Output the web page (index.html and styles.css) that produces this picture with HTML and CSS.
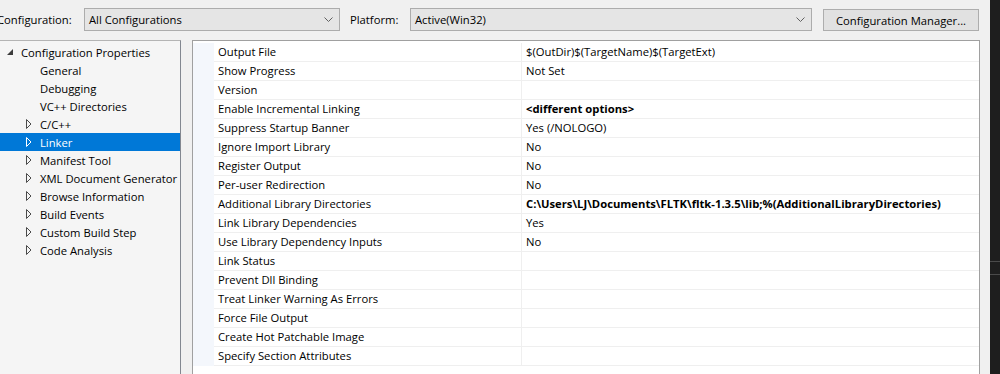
FILE: index.html
```html
<!DOCTYPE html>
<html>
<head>
<meta charset="utf-8">
<title>Property Pages</title>
<link rel="stylesheet" href="styles.css">
</head>
<body>
<div class="page">
  <div class="main">
    <div class="toolbar">
      <span class="lbl lbl-config">Configuration:</span>
      <div class="combo combo-config"><span>All Configurations</span><svg class="chev" viewBox="0 0 9 5"><polyline points="0.5,0.5 4.5,4.5 8.5,0.5" fill="none" stroke="#606060" stroke-width="1"/></svg></div>
      <span class="lbl lbl-platform">Platform:</span>
      <div class="combo combo-platform"><span>Active(Win32)</span><svg class="chev" viewBox="0 0 9 5"><polyline points="0.5,0.5 4.5,4.5 8.5,0.5" fill="none" stroke="#606060" stroke-width="1"/></svg></div>
      <div class="btn">Configuration Manager...</div>
    </div>
    <div class="body">
      <div class="tree">
        <div class="node root"><svg class="exp" viewBox="0 0 6 6"><polygon points="6,0 6,6 0,6" fill="#3c3c3c"/></svg><span>Configuration Properties</span></div>
        <div class="node leaf">General</div>
        <div class="node leaf">Debugging</div>
        <div class="node leaf">VC++ Directories</div>
        <div class="node child"><svg class="tog" viewBox="0 0 6 10"><polygon points="0.5,0.5 5,5 0.5,9.5" fill="none" stroke="#4a4a4a" stroke-width="1"/></svg><span>C/C++</span></div>
        <div class="node child sel"><svg class="tog" viewBox="0 0 6 10"><polygon points="0.5,0.5 5,5 0.5,9.5" fill="none" stroke="#ffffff" stroke-width="1"/></svg><span>Linker</span></div>
        <div class="node child"><svg class="tog" viewBox="0 0 6 10"><polygon points="0.5,0.5 5,5 0.5,9.5" fill="none" stroke="#4a4a4a" stroke-width="1"/></svg><span>Manifest Tool</span></div>
        <div class="node child"><svg class="tog" viewBox="0 0 6 10"><polygon points="0.5,0.5 5,5 0.5,9.5" fill="none" stroke="#4a4a4a" stroke-width="1"/></svg><span>XML Document Generator</span></div>
        <div class="node child"><svg class="tog" viewBox="0 0 6 10"><polygon points="0.5,0.5 5,5 0.5,9.5" fill="none" stroke="#4a4a4a" stroke-width="1"/></svg><span>Browse Information</span></div>
        <div class="node child"><svg class="tog" viewBox="0 0 6 10"><polygon points="0.5,0.5 5,5 0.5,9.5" fill="none" stroke="#4a4a4a" stroke-width="1"/></svg><span>Build Events</span></div>
        <div class="node child"><svg class="tog" viewBox="0 0 6 10"><polygon points="0.5,0.5 5,5 0.5,9.5" fill="none" stroke="#4a4a4a" stroke-width="1"/></svg><span>Custom Build Step</span></div>
        <div class="node child"><svg class="tog" viewBox="0 0 6 10"><polygon points="0.5,0.5 5,5 0.5,9.5" fill="none" stroke="#4a4a4a" stroke-width="1"/></svg><span>Code Analysis</span></div>
      </div>
      <div class="grid">
        <div class="row"><div class="gut"></div><div class="name">Output File</div><div class="val">$(OutDir)$(TargetName)$(TargetExt)</div></div>
        <div class="row"><div class="gut"></div><div class="name">Show Progress</div><div class="val">Not Set</div></div>
        <div class="row"><div class="gut"></div><div class="name">Version</div><div class="val"></div></div>
        <div class="row"><div class="gut"></div><div class="name">Enable Incremental Linking</div><div class="val bold">&lt;different options&gt;</div></div>
        <div class="row"><div class="gut"></div><div class="name">Suppress Startup Banner</div><div class="val">Yes (/NOLOGO)</div></div>
        <div class="row"><div class="gut"></div><div class="name">Ignore Import Library</div><div class="val">No</div></div>
        <div class="row"><div class="gut"></div><div class="name">Register Output</div><div class="val">No</div></div>
        <div class="row"><div class="gut"></div><div class="name">Per-user Redirection</div><div class="val">No</div></div>
        <div class="row"><div class="gut"></div><div class="name">Additional Library Directories</div><div class="val bold">C:\Users\LJ\Documents\FLTK\fltk-1.3.5\lib;%(AdditionalLibraryDirectories)</div></div>
        <div class="row"><div class="gut"></div><div class="name">Link Library Dependencies</div><div class="val">Yes</div></div>
        <div class="row"><div class="gut"></div><div class="name">Use Library Dependency Inputs</div><div class="val">No</div></div>
        <div class="row"><div class="gut"></div><div class="name">Link Status</div><div class="val"></div></div>
        <div class="row"><div class="gut"></div><div class="name">Prevent Dll Binding</div><div class="val"></div></div>
        <div class="row"><div class="gut"></div><div class="name">Treat Linker Warning As Errors</div><div class="val"></div></div>
        <div class="row"><div class="gut"></div><div class="name">Force File Output</div><div class="val"></div></div>
        <div class="row"><div class="gut"></div><div class="name">Create Hot Patchable Image</div><div class="val"></div></div>
        <div class="row"><div class="gut"></div><div class="name">Specify Section Attributes</div><div class="val"></div></div>
      </div>
    </div>
  </div>
  <div class="dark"><div class="dl dl1"></div><div class="dl dl2"></div></div>
</div>
</body>
</html>
```
FILE: styles.css
```css
* { box-sizing: border-box; }
html, body { margin: 0; padding: 0; }
body {
  width: 1000px;
  height: 374px;
  overflow: hidden;
  background: #f0f0f0;
  font-family: "Open Sans", "Noto Sans", sans-serif;
  font-size: 11.25px;
  color: #000;
}
.page { display: flex; height: 374px; }
.main { width: 990px; display: flex; flex-direction: column; }
.dark { width: 10px; background: #1e1e1e; display: flex; flex-direction: column; }
.dl { height: 1px; background: #4a4a4a; }
.dl1 { margin-top: 261px; }
.dl2 { margin-top: 12px; }

.toolbar { height: 40px; flex: none; display: flex; align-items: flex-start; padding-top: 8px; white-space: nowrap; }
.lbl { line-height: 23px; }
.lbl-config { margin-left: -3px; width: 87px; }
.lbl-platform { margin-left: 10px; width: 60px; }
.combo {
  height: 23px;
  background: #e5e5e5;
  border: 1px solid #acacac;
  display: flex;
  align-items: center;
  justify-content: space-between;
  padding: 0 6px 0 4px;
}
.combo-config { width: 256px; }
.combo-platform { width: 402px; }
.chev { width: 9px; height: 5px; }
.btn {
  margin-left: 11px;
  margin-top: 1px;
  width: 156px;
  height: 22px;
  background: #e1e1e1;
  border: 1px solid #adadad;
  display: flex;
  align-items: center;
  justify-content: center;
}

.body { flex: 1; display: flex; min-height: 0; }
.tree {
  width: 181px;
  flex: none;
  background: #f5f5f5;
  border-top: 1px solid #b4b4b4;
  border-right: 1px solid #828790;
  padding-top: 2px;
}
.node { height: 18px; display: flex; align-items: center; white-space: nowrap; }
.root { padding-left: 7px; }
.exp { width: 6px; height: 6px; margin-right: 8px; }
.child { padding-left: 26px; }
.tog { width: 6px; height: 10px; margin-right: 8px; }
.leaf { padding-left: 40px; }
.sel { background: #0078d7; color: #fff; }

.grid {
  margin-left: 11px;
  width: 788px;
  flex: none;
  background: #fff;
  border: 1px solid #a0a0a0;
  border-bottom: none;
  padding-top: 2px;
}
.row { display: flex; height: 19px; }
.gut { width: 21px; background: #f4f7fc; }
.name {
  width: 307px;
  border-bottom: 1px solid #efefef;
  padding-left: 4px;
  line-height: 18px;
  white-space: nowrap;
}
.val {
  width: 458px;
  border-left: 1px solid #efefef;
  border-bottom: 1px solid #efefef;
  padding-left: 4px;
  line-height: 18px;
  white-space: nowrap;
}
.bold { font-weight: 700; }
```
